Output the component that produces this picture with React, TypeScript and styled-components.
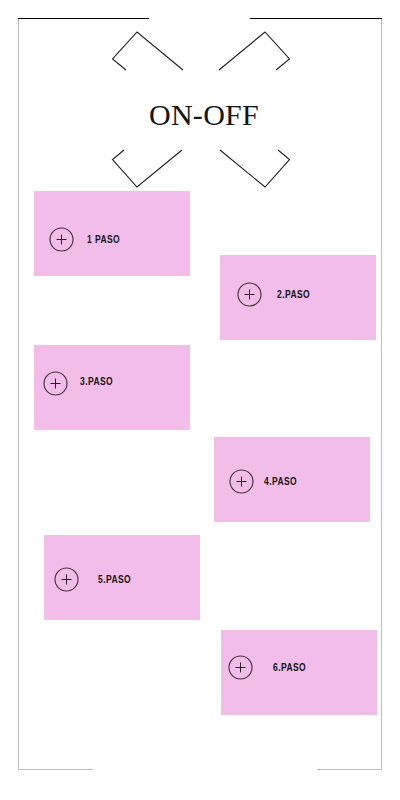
import React from "react";
import styled, { createGlobalStyle } from "styled-components";

const GlobalStyle = createGlobalStyle`
  html, body { margin: 0; padding: 0; background: #ffffff; }
  body { font-family: "Liberation Sans", Arial, sans-serif; }
`;

const Page = styled.div`
  width: 400px;
  min-height: 800px;
  padding: 18px 0 0 18px;
  box-sizing: border-box;
`;

const Frame = styled.div`
  width: 364px;
  display: flex;
  flex-direction: column;
`;

const EdgeBar = styled.div`
  display: flex;
  justify-content: space-between;
  height: 1px;
`;

const Segment = styled.div<{ $w: number; $color: string }>`
  width: ${(p) => p.$w}px;
  height: 1px;
  background: ${(p) => p.$color};
`;

const Body = styled.div`
  border-left: 1px solid #bdbdbd;
  border-right: 1px solid #bdbdbd;
  display: flex;
  flex-direction: column;
  padding-bottom: 54px;
`;

const Header = styled.div`
  position: relative;
  height: 172px;
  display: flex;
  justify-content: center;
  padding-top: 81px;
  padding-left: 8px;
  box-sizing: border-box;
`;

const Chevrons = styled.svg`
  position: absolute;
  left: -1px;
  top: -1px;
  pointer-events: none;
`;

const Title = styled.h1`
  position: relative;
  margin: 0;
  font-family: "Liberation Serif", "Times New Roman", serif;
  font-weight: 400;
  font-size: 30px;
  line-height: 30px;
  color: #141414;
  letter-spacing: 0.3px;
`;

const Card = styled.div<{ $left: number; $top: number; $padTop: number; $padLeft: number }>`
  margin-left: ${(p) => p.$left}px;
  margin-top: ${(p) => p.$top}px;
  width: 156px;
  height: 85px;
  background: #f3bde9;
  display: flex;
  align-items: flex-start;
  align-self: flex-start;
  padding-top: ${(p) => p.$padTop}px;
  padding-left: ${(p) => p.$padLeft}px;
  box-sizing: border-box;
`;

const IconRow = styled.div<{ $gap: number; $textShift: number }>`
  display: flex;
  align-items: center;
  gap: ${(p) => p.$gap}px;
  & > span { margin-top: ${(p) => p.$textShift}px; }
`;

const Label = styled.span`
  display: inline-block;
  font-family: "Liberation Sans", Arial, sans-serif;
  font-weight: 700;
  font-size: 10px;
  letter-spacing: 0.5px;
  color: #111;
  line-height: 12px;
  transform: scaleX(0.85);
  transform-origin: left center;
  white-space: nowrap;
`;

const PlusCircle = () => (
  <svg width="25" height="25" viewBox="0 0 25 25">
    <circle cx="12.5" cy="12.5" r="11.5" fill="none" stroke="#45323f" strokeWidth="1.15" />
    <line x1="12.5" y1="7.5" x2="12.5" y2="17.5" stroke="#2a2028" strokeWidth="1" />
    <line x1="7.5" y1="12.5" x2="17.5" y2="12.5" stroke="#2a2028" strokeWidth="1" />
  </svg>
);

const steps = [
  { label: "1 PASO", left: 15, top: 0, circleTop: 36, circleLeft: 15, gap: 13, shift: 0 },
  { label: "2.PASO", left: 201, top: -21, circleTop: 27, circleLeft: 17, gap: 15, shift: 0 },
  { label: "3.PASO", left: 15, top: 5, circleTop: 26, circleLeft: 9, gap: 12, shift: -4 },
  { label: "4.PASO", left: 195, top: 7, circleTop: 32, circleLeft: 15, gap: 10, shift: 0 },
  { label: "5.PASO", left: 25, top: 13, circleTop: 32, circleLeft: 10, gap: 19, shift: 0 },
  { label: "6.PASO", left: 202, top: 10, circleTop: 25, circleLeft: 7, gap: 20, shift: 0 },
];

export default function App() {
  return (
    <>
      <GlobalStyle />
      <Page>
        <Frame>
          <EdgeBar>
            <Segment $w={131} $color="#000" />
            <Segment $w={132} $color="#000" />
          </EdgeBar>
          <Body>
            <Header>
              <Chevrons width="364" height="173" viewBox="18 18 364 173">
                <g fill="none" stroke="#1e1e1e" strokeWidth="1.1" strokeLinejoin="miter">
                  <polyline points="126,70 112.5,59 137,32 183,70" />
                  <polyline points="276,70 289.5,59 265,32 219,70" />
                  <polyline points="124,150 112.5,159.5 137,187 182,150" />
                  <polyline points="278,150 289.5,159.5 265,187 220,150" />
                </g>
              </Chevrons>
              <Title>ON-OFF</Title>
            </Header>
            {steps.map((s) => (
              <Card
                key={s.label}
                $left={s.left}
                $top={s.top}
                $padTop={s.circleTop}
                $padLeft={s.circleLeft}
              >
                <IconRow $gap={s.gap} $textShift={s.shift}>
                  <PlusCircle />
                  <Label>{s.label}</Label>
                </IconRow>
              </Card>
            ))}
          </Body>
          <EdgeBar>
            <Segment $w={75} $color="#bdbdbd" />
            <Segment $w={65} $color="#bdbdbd" />
          </EdgeBar>
        </Frame>
      </Page>
    </>
  );
}
